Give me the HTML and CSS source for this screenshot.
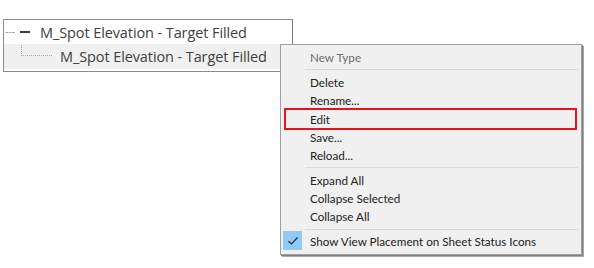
FILE: index.html
```html
<!DOCTYPE html>
<html>
<head>
<meta charset="utf-8">
<link rel="stylesheet" href="styles.css">
</head>
<body>
<div class="tree">
  <div class="row row-parent">
    <span class="dash-left"></span>
    <span class="minus"></span>
    <span class="label">M_Spot Elevation - Target Filled</span>
  </div>
  <div class="row row-child">
    <span class="connector"></span>
    <span class="label">M_Spot Elevation - Target Filled</span>
  </div>
</div>

<div class="menu">
  <div class="item disabled">New Type</div>
  <div class="sep"></div>
  <div class="item">Delete</div>
  <div class="item">Rename...</div>
  <div class="item highlight">Edit</div>
  <div class="item">Save...</div>
  <div class="item">Reload...</div>
  <div class="sep"></div>
  <div class="item">Expand All</div>
  <div class="item">Collapse Selected</div>
  <div class="item">Collapse All</div>
  <div class="sep sep-last"></div>
  <div class="item checked">
    <span class="check"><svg width="12" height="10" viewBox="0 0 12 10"><path d="M1.5 5.2 L4.5 8 L10.5 1.5" fill="none" stroke="#2b2b2b" stroke-width="1.2"/></svg></span>
    Show View Placement on Sheet Status Icons
  </div>
</div>
</body>
</html>
```
FILE: styles.css
```css
html, body {
  margin: 0;
  padding: 0;
  background: #ffffff;
}
body {
  position: relative;
  width: 594px;
  height: 268px;
  overflow: hidden;
  font-family: "Open Sans", "Noto Sans", sans-serif;
}
.tree {
  margin: 19px 0 0 3px;
  width: 288px;
  height: 51px;
  border: 1px solid #8c8c8c;
  border-right-color: #7a7a7a;
  display: flex;
  flex-direction: column;
}
.row {
  display: flex;
  align-items: center;
  color: #404040;
  font-size: 14.5px;
  letter-spacing: -0.1px;
  position: relative;
}
.row-parent {
  height: 24px;
  background: #ffffff;
}
.row-child {
  height: 25px;
  background: #f0f0f0;
  margin-bottom: 2px;
}
.dash-left {
  width: 10px;
  height: 0;
  border-top: 1px dashed #b0b0b0;
  margin-left: 1px;
}
.minus {
  width: 10px;
  height: 2px;
  background: #404040;
  margin-left: 5px;
}
.row-parent .label {
  margin-left: 10px;
}
.connector {
  width: 30px;
  height: 10px;
  margin-left: 17px;
  margin-top: -12px;
  border-left: 1px dotted #a8a8a8;
  border-bottom: 1px dotted #a8a8a8;
}
.row-child .label {
  margin-left: 8px;
}
.menu {
  position: absolute;
  left: 280px;
  top: 44px;
  width: 300px;
  padding: 3px 0 3px 0;
  background: #f0f0f0;
  border: 1px solid #a0a0a0;
  box-shadow: 1px 1px 0 #7f7f7f, 2px 2px 0 #a8a8a8;
  font-family: "Lato", "Open Sans", sans-serif;
  font-size: 11.7px;
  color: #222222;
}
.item {
  height: 18.4px;
  line-height: 18.4px;
  padding-left: 29px;
  position: relative;
  box-sizing: border-box;
}
.item.disabled {
  color: #6d6d6d;
  height: 19px;
  line-height: 18px;
}
.item.highlight::before {
  content: "";
  position: absolute;
  left: 3px;
  top: -2px;
  width: 289px;
  height: 18px;
  border: 2px solid #e8141c;
}
.sep {
  height: 1px;
  background: #dadada;
  margin: 2.4px 3px 2.4px 24px;
}
.sep.sep-last {
  margin-top: 3px;
  margin-bottom: 2.8px;
}
.item.checked {
  height: 19px;
  line-height: 19px;
}
.check {
  position: absolute;
  left: 2px;
  top: -1px;
  width: 19px;
  height: 19px;
  background: #91c9f7;
  display: flex;
  align-items: center;
  justify-content: center;
}
```
